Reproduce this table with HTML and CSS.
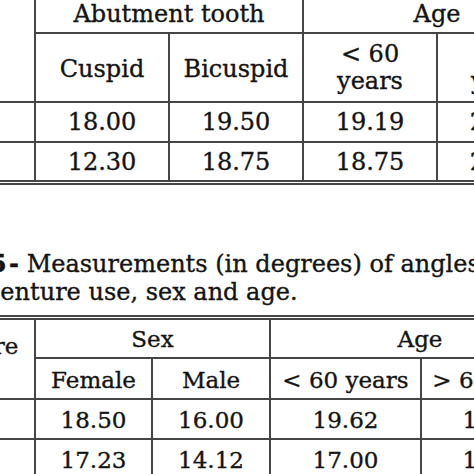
FILE: index.html
```html
<!DOCTYPE html>
<html>
<head>
<meta charset="utf-8">
<link rel="stylesheet" href="styles.css">
</head>
<body>
<div class="page">
  <table class="t t1">
    <colgroup><col class="w134"><col class="w134"><col class="w134"><col class="w134"><col class="w134"></colgroup>
    <tr class="h1">
      <td rowspan="2"></td>
      <td colspan="2" class="top">Abutment tooth</td>
      <td colspan="2" class="top">Age</td>
    </tr>
    <tr class="h2">
      <td class="single">Cuspid</td>
      <td class="single">Bicuspid</td>
      <td>&lt; 60<br>years</td>
      <td>&gt; 60<br>years</td>
    </tr>
    <tr class="d1">
      <td></td><td>18.00</td><td>19.50</td><td>19.19</td><td>21.25</td>
    </tr>
    <tr class="d2">
      <td></td><td>12.30</td><td>18.75</td><td>18.75</td><td>20.00</td>
    </tr>
  </table>
  <div class="rule rule-after"></div>

  <p class="cap"><b class="num">5 -</b> Measurements (in degrees) of angles<br>denture use, sex and age.</p>

  <div class="rule rule-before"></div>
  <table class="t t2">
    <colgroup><col class="w129"><col class="w117"><col class="w118"><col class="w151"><col class="w149"></colgroup>
    <tr class="b1">
      <td rowspan="2" class="two">Denture<br>use</td>
      <td colspan="2">Sex</td>
      <td colspan="2">Age</td>
    </tr>
    <tr class="b2">
      <td>Female</td><td>Male</td><td>&lt; 60 years</td><td>&gt; 60 years</td>
    </tr>
    <tr class="b3">
      <td></td><td>18.50</td><td>16.00</td><td>19.62</td><td>17.10</td>
    </tr>
    <tr class="b4">
      <td></td><td>17.23</td><td>14.12</td><td>17.00</td><td>16.50</td>
    </tr>
  </table>
</div>
</body>
</html>
```

FILE: styles.css
```css
html, body {
  margin: 0;
  padding: 0;
  background: #ffffff;
}
body {
  width: 474px;
  height: 474px;
  overflow: hidden;
  color: #141414;
  font-family: "DejaVu Serif", "Liberation Serif", serif;
  -webkit-text-stroke: 0.35px #141414;
}
.page {
  width: 720px;
}
.t {
  border-collapse: collapse;
  table-layout: fixed;
}
.t td {
  border: 2px solid #454545;
  padding: 0;
  text-align: center;
  vertical-align: middle;
  white-space: nowrap;
}
.t1 {
  width: 670px;
  margin-left: -100px;
  margin-top: -9px;
  font-size: 24px;
  line-height: 27px;
}
.w134 { width: 134px; }
.w129 { width: 129px; }
.w117 { width: 117px; }
.w118 { width: 118px; }
.w151 { width: 151px; }
.w149 { width: 149px; }
.t1 .h1 { height: 41px; }
.t1 .h2 { height: 69px; }
.t1 .d1 { height: 40px; }
.t1 .d2 { height: 39px; }
.t1 .top { padding-top: 3px; }
.t1 .single { padding-top: 4px; }
.t1 .d1 td, .t1 .d2 td { padding-top: 1px; }

.rule {
  border-top: 2px solid #454545;
  height: 0;
}
.rule-after { margin-top: 1px; }
.rule-before { margin-top: 9px; }

.cap {
  margin: 65px 0 0 -15px;
  text-indent: 5px;
  font-size: 24px;
  line-height: 28px;
  white-space: nowrap;
}
.num {
  word-spacing: -6px;
}

.t2 {
  width: 664px;
  margin-left: -95px;
  margin-top: 1px;
  font-size: 23px;
  line-height: 27px;
}
.t2 .b1 { height: 39px; }
.t2 .b2 { height: 41px; }
.t2 .b3 { height: 40px; }
.t2 .b4 { height: 40px; }
.t2 .b1 td { padding-top: 1px; }
.t2 .b2 td, .t2 .b3 td, .t2 .b4 td { padding-top: 3px; }
```
